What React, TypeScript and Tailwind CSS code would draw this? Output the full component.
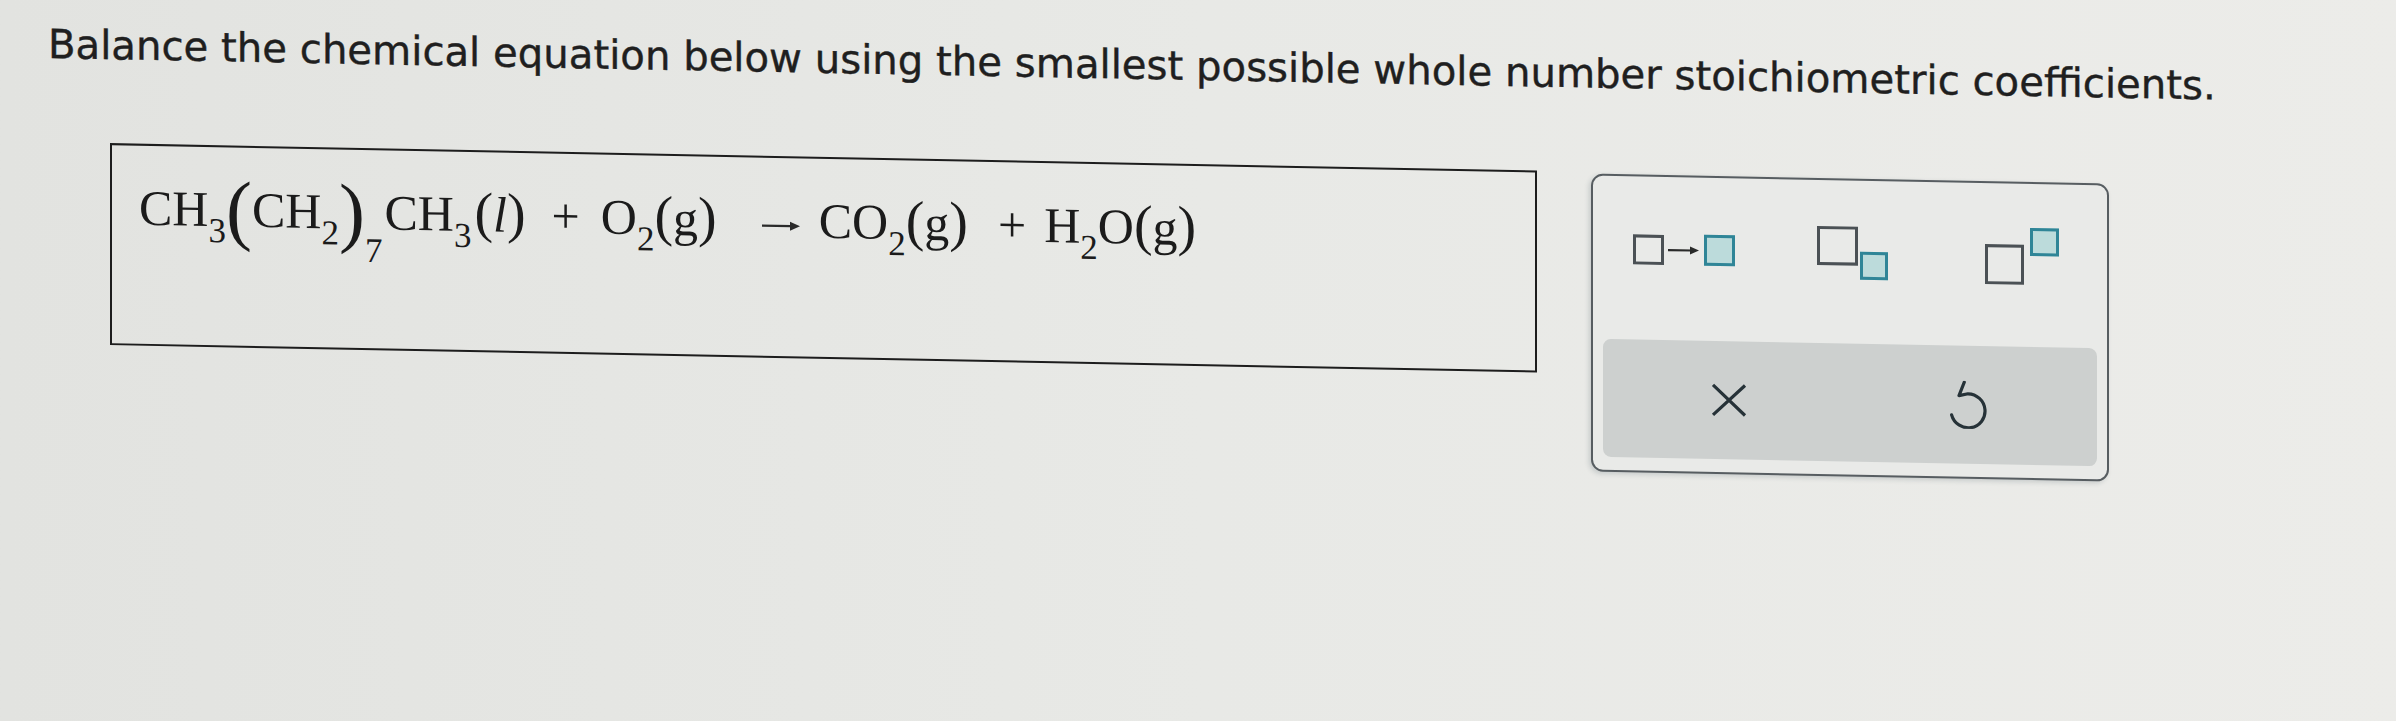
import type { ReactNode } from "react";

function Sub({ children, low }: { children: ReactNode; low?: boolean }) {
  return (
    <span
      className={
        low
          ? "relative top-[33px] text-[35px] leading-none"
          : "relative top-[16px] text-[35px] leading-none"
      }
    >
      {children}
    </span>
  );
}

function BigParen({ children, className = "" }: { children: ReactNode; className?: string }) {
  return (
    <span className={"relative top-[9px] text-[78px] leading-none " + className}>
      {children}
    </span>
  );
}

function Paren({ children, className = "" }: { children: ReactNode; className?: string }) {
  return <span className={"text-[56px] leading-none " + className}>{children}</span>;
}

function Plus({ className = "" }: { className?: string }) {
  return <span className={"leading-none " + className}>+</span>;
}

function Arrow() {
  return (
    <svg width="40" height="22" viewBox="0 0 40 22" className="ml-[44px] mr-[18px]">
      <line x1="1" y1="11" x2="30" y2="11" stroke="#2a2a2a" strokeWidth="2.2" />
      <polygon points="29,6.5 39,11 29,15.5" fill="#2a2a2a" />
    </svg>
  );
}

function Equation() {
  return (
    <div className="flex items-baseline whitespace-nowrap font-['Liberation_Serif','Times_New_Roman',serif] text-[50px] leading-none text-[#1b1b1b]">
      <span>CH</span>
      <Sub>3</Sub>
      <BigParen>(</BigParen>
      <span>CH</span>
      <Sub>2</Sub>
      <BigParen>)</BigParen>
      <Sub low>7</Sub>
      <span className="ml-[2px]">CH</span>
      <Sub>3</Sub>
      <Paren className="ml-[3px]">(</Paren>
      <span className="italic">l</span>
      <Paren>)</Paren>
      <Plus className="ml-[26px] mr-[21px]" />
      <span>O</span>
      <Sub>2</Sub>
      <Paren>(</Paren>
      <span>g</span>
      <Paren>)</Paren>
      <Arrow />
      <span>CO</span>
      <Sub>2</Sub>
      <Paren>(</Paren>
      <span>g</span>
      <Paren>)</Paren>
      <Plus className="ml-[30px] mr-[18px]" />
      <span>H</span>
      <Sub>2</Sub>
      <span>O</span>
      <Paren>(</Paren>
      <span>g</span>
      <Paren>)</Paren>
    </div>
  );
}

function EmptyBox({ className = "" }: { className?: string }) {
  return <div className={"border-[3px] border-[#4b5155] " + className} />;
}

function TealBox({ className = "" }: { className?: string }) {
  return <div className={"border-[3px] border-[#2f8597] bg-[#bcdbdb] " + className} />;
}

function XIcon() {
  return (
    <svg width="36" height="34" viewBox="0 0 36 34" fill="none">
      <path d="M2 2 L34 32 M34 2 L2 32" stroke="#263238" strokeWidth="3.2" />
    </svg>
  );
}

function UndoIcon() {
  return (
    <svg width="40" height="48" viewBox="0 0 40 48" fill="none">
      <path
        d="M16.3 1.5 L11 15 L20 13 A17 17 0 1 1 3.6 34.4"
        stroke="#263238"
        strokeWidth="3.2"
        strokeLinecap="round"
        strokeLinejoin="round"
      />
    </svg>
  );
}

function Panel() {
  return (
    <div className="ml-[54px] mt-[2px] flex h-[298px] w-[518px] flex-col rounded-[12px] border-[2.5px] border-[#575d61] bg-[#e9eae8] shadow-[-2px_2px_5px_rgba(40,60,70,0.18)]">
      <div className="grid h-[163px] grid-cols-3 items-center pb-[18px] pl-[6px]">
        <div className="flex items-center justify-center">
          <EmptyBox className="h-[30px] w-[31px]" />
          <svg width="32" height="12" viewBox="0 0 32 12" className="mx-[4px]">
            <line x1="0" y1="6" x2="24" y2="6" stroke="#2a2a2a" strokeWidth="2.2" />
            <polygon points="22,2 31,6 22,10" fill="#2a2a2a" />
          </svg>
          <TealBox className="h-[31px] w-[31px]" />
        </div>
        <div className="flex items-start justify-center">
          <EmptyBox className="h-[39px] w-[41px]" />
          <TealBox className="ml-[2px] mt-[25px] h-[28px] w-[28px]" />
        </div>
        <div className="flex items-start justify-center">
          <EmptyBox className="mt-[17px] h-[40px] w-[39px]" />
          <TealBox className="ml-[6px] h-[28px] w-[29px]" />
        </div>
      </div>
      <div className="mx-[10px] grid h-[118px] grid-cols-2 items-center rounded-[8px] bg-[#cdd0cf] pl-[6px] pr-[10px]">
        <div className="flex justify-center">
          <XIcon />
        </div>
        <div className="flex justify-center">
          <UndoIcon />
        </div>
      </div>
    </div>
  );
}

export default function App() {
  return (
    <div className="h-screen w-full overflow-hidden bg-linear-to-r from-[#e2e3e0] via-[#e8e9e6] to-[#ecece9]">
      <div className="origin-left skew-y-[1.1deg] pl-[48px] pt-[23px]">
        <p className="whitespace-nowrap font-['DejaVu_Sans',Verdana,sans-serif] text-[40.2px] leading-[40px] text-[#1f1f1f] [-webkit-text-stroke:0.4px_#1f1f1f]">
          Balance the chemical equation below using the smallest possible whole number stoichiometric coefficients.
        </p>
        <div className="mt-[78px] flex items-start">
          <div className="ml-[62px] h-[202px] w-[1427px] border-2 border-[#1d1d1d] pl-[27px] pt-[14px]">
            <Equation />
          </div>
          <Panel />
        </div>
      </div>
    </div>
  );
}
